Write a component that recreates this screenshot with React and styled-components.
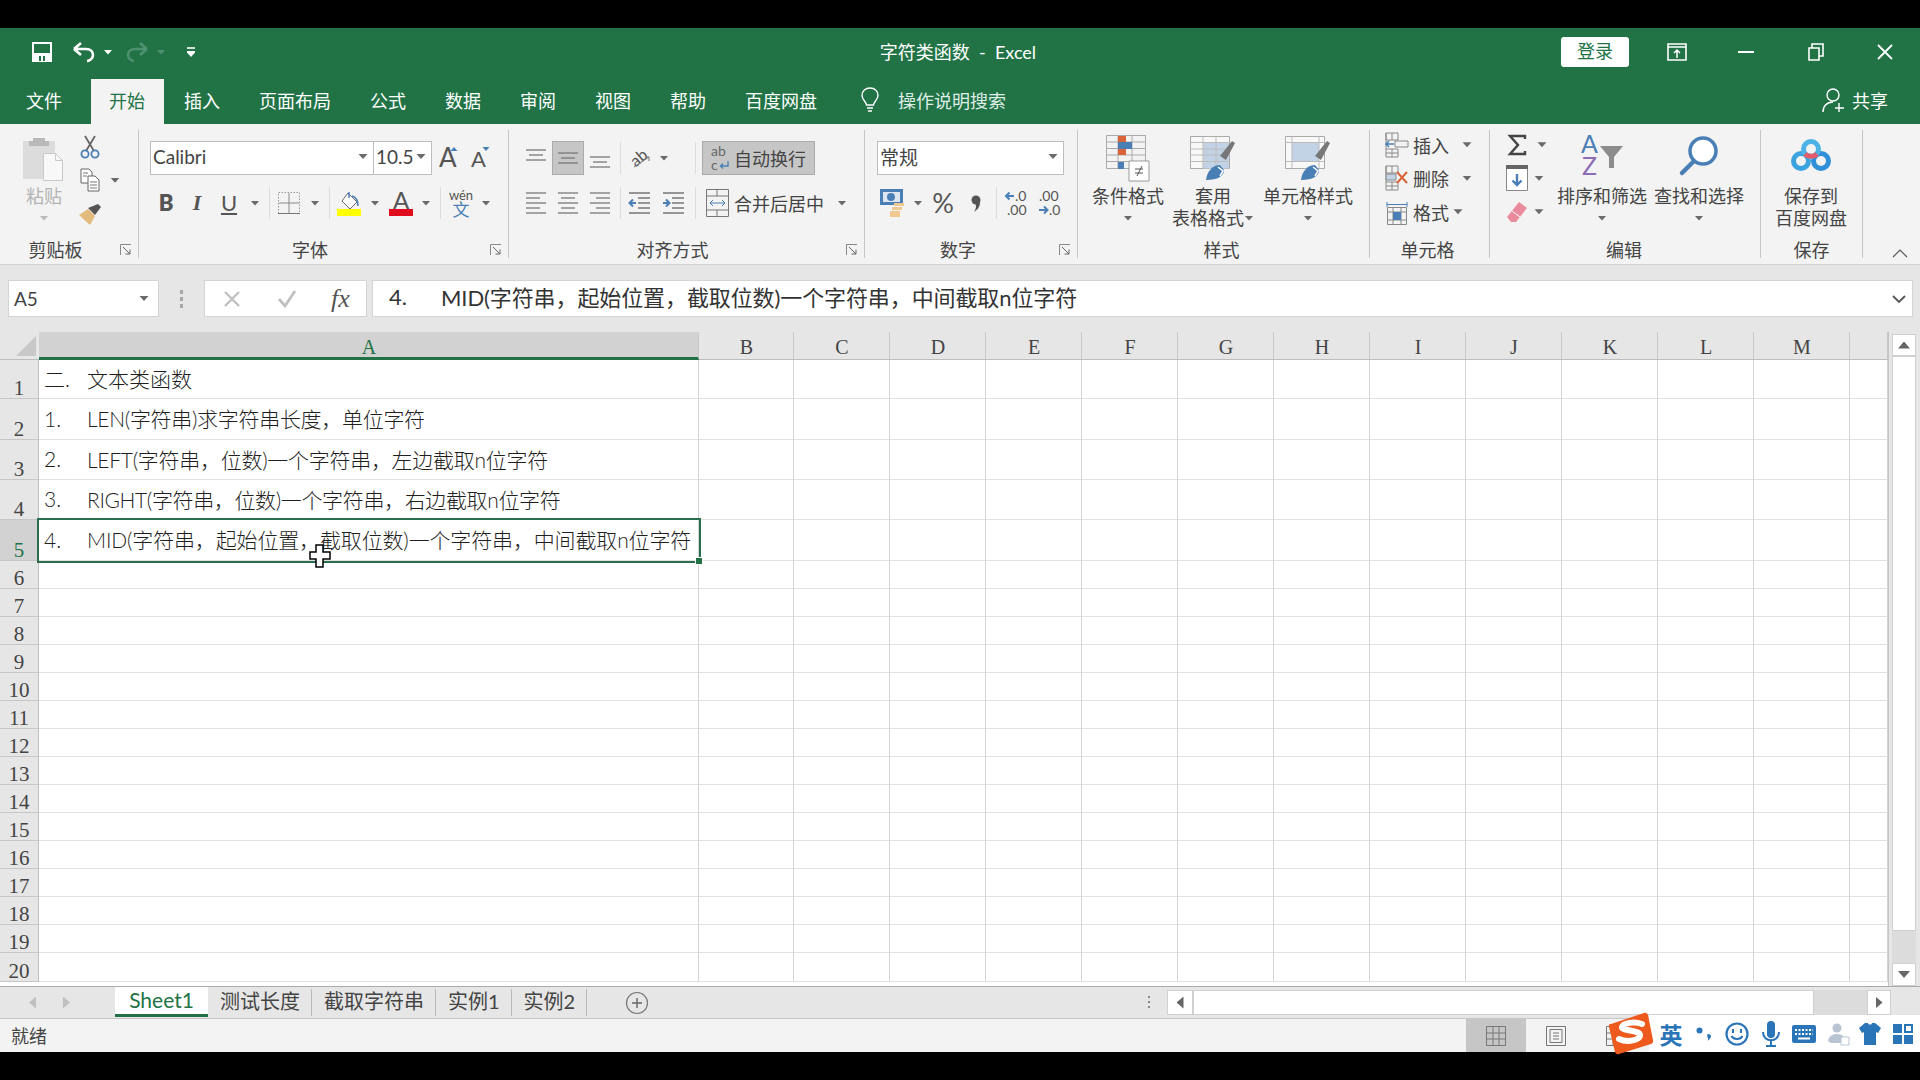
import React from 'react'
import styled, { createGlobalStyle } from 'styled-components'

const GREEN = '#217346'
const INK = '#444'
const BLUE = '#4a7fb5'

const Global = createGlobalStyle`
  html, body { margin: 0; padding: 0; background: #000; overflow: hidden; }
  * { box-sizing: border-box; }
  svg { display: block; flex: none; overflow: visible; }
`

const Icon = ({ w, h, children }) => (
  <svg width={w} height={h} viewBox={`0 0 ${w} ${h}`} fill="none">{children}</svg>
)

/* title bar icons */
const SaveIcon = () => (
  <Icon w={20} h={20}>
    <path d="M1 1h18v18H1z" stroke="#fff" strokeWidth="2" />
    <path d="M1 11h18v8H1z" fill="#fff" />
    <path d="M7 14h2v5H7z" fill={GREEN} />
    <path d="M11 14h2v5h-2z" fill={GREEN} />
  </Icon>
)
const UndoIcon = ({ c = '#fff' }) => (
  <Icon w={24} h={22}>
    <path d="M2 8l7-6M2 8l7 6M2 8h12c5 0 7 3 7 6s-3 6-6 6" stroke={c} strokeWidth="2.6" />
  </Icon>
)
const RedoIcon = () => (
  <Icon w={24} h={22}>
    <path d="M22 8l-7-6M22 8l-7 6M22 8H10c-5 0-7 3-7 6s3 6 6 6" stroke="#4f9070" strokeWidth="2.6" />
  </Icon>
)
const CustomizeIcon = () => (
  <Icon w={10} h={11}>
    <path d="M1 1h8" stroke="#fff" strokeWidth="1.6" />
    <path d="M1 4h8v1.5L5 10 1 5.500z" fill="#fff" />
  </Icon>
)
const RibbonModeIcon = () => (
  <Icon w={20} h={18}>
    <path d="M1 1h18v16H1z M1 4h18" stroke="#fff" strokeWidth="1.6" />
    <path d="M10 15V7M7 10l3-3 3 3" stroke="#fff" strokeWidth="1.5" />
  </Icon>
)
const MinIcon = () => <Icon w={16} h={4}><path d="M0 2h16" stroke="#fff" strokeWidth="2" /></Icon>
const RestoreIcon = () => (
  <Icon w={16} h={18}>
    <path d="M1 5h10v12H1zM4 5V1h11v12h-4" stroke="#fff" strokeWidth="1.6" />
  </Icon>
)
const CloseIcon = () => <Icon w={16} h={16}><path d="M1 1l14 14M15 1L1 15" stroke="#fff" strokeWidth="1.8" /></Icon>
const BulbIcon = () => (
  <Icon w={20} h={26}>
    <path d="M6.500 18c0-3-4.500-5-4.500-9.500C2 4 5.500 1 10 1s8 3 8 7.500C18 13 13.500 15 13.500 18z" stroke="#fff" strokeWidth="1.4" />
    <path d="M7 21h6M8 24h4" stroke="#fff" strokeWidth="1.6" />
  </Icon>
)
const ShareIcon = () => (
  <Icon w={24} h={26}>
    <circle cx="11" cy="8" r="6" stroke="#fff" strokeWidth="1.4" />
    <path d="M1 25c0-6 4-10 10-10M17 16v9M13 21h9" stroke="#fff" strokeWidth="1.4" />
  </Icon>
)

/* clipboard */
const PasteIcon = () => (
  <Icon w={42} h={46}>
    <path d="M0 6h32v38H0z" fill="#dcdcdc" />
    <path d="M10 3h12v3h4v5H6V6h4z" fill="#b9b9b9" />
    <path d="M20.500 18.500h12l7 7v20h-19z" fill="#f8f8f8" stroke="#c8c8c8" />
    <path d="M32.500 18.500v7h7" stroke="#c8c8c8" />
  </Icon>
)
const ScissorsIcon = () => (
  <Icon w={20} h={24}>
    <path d="M5 1l9 15M15 1L6 16" stroke="#666" strokeWidth="1.8" />
    <circle cx="5" cy="19" r="3.600" stroke={BLUE} strokeWidth="1.8" />
    <circle cx="15" cy="19" r="3.600" stroke={BLUE} strokeWidth="1.8" />
  </Icon>
)
const CopyIcon = () => (
  <Icon w={20} h={24}>
    <path d="M1 1h8l3 3v11H1z" fill="#fff" stroke="#666" />
    <path d="M8 8h7l4 4v11H8z" fill="#fff" stroke="#666" />
    <path d="M3 5h5M3 8h4M10 14h7M10 17h7M10 20h7" stroke="#777" />
  </Icon>
)
const BrushIcon = () => (
  <Icon w={24} h={22}>
    <path d="M1 12l9-6 7 7-5 9z" fill="#e3bb7c" />
    <path d="M10 5l7 7 6-8-3-3z" fill="#555" />
  </Icon>
)

/* font */
const GrowIcon = () => (
  <Icon w={26} h={24}>
    <text x="5" y="21" fontFamily="Lato, sans-serif" fontSize="26" fill="#555">A</text>
    <path d="M16.500 5l3.500-4 3.500 4z" fill={BLUE} />
  </Icon>
)
const ShrinkIcon = () => (
  <Icon w={26} h={24}>
    <text x="7" y="21" fontFamily="Lato, sans-serif" fontSize="22" fill="#555">A</text>
    <path d="M18.500 1h7L22 5z" fill={BLUE} />
  </Icon>
)
const BorderIcon = () => (
  <Icon w={22} h={22}>
    <path d="M.5.500h21v21H.5z" stroke="#999" strokeDasharray="1.500 1.500" />
    <path d="M11 1v20M1 11h20" stroke="#888" />
    <path d="M0 21.500h22" stroke="#777" />
  </Icon>
)
const FillIcon = () => (
  <Icon w={24} h={25}>
    <path d="M11 2l9 9-7 7-8-8z" fill="#fff" stroke="#666" />
    <path d="M12 1v6M15 5c4 1 6 5 6 10" stroke={BLUE} strokeWidth="1.500" />
    <path d="M0 18h24v7H0z" fill="#ffff00" />
  </Icon>
)
const ColorIcon = () => (
  <Icon w={24} h={25}>
    <text x="12" y="18" textAnchor="middle" fontFamily="Lato, sans-serif" fontSize="24" fill="#555">A</text>
    <path d="M0 18h24v7H0z" fill="#e00b1c" />
  </Icon>
)

/* align */
const Lines = ({ rows }) => (
  <Icon w={22} h={24}>
    {rows.map(([a, b, y], i) => <path key={i} d={`M${a} ${y}H${b}`} stroke="#777" strokeWidth="1.300" />)}
  </Icon>
)
const alTop = [[1, 21, 4], [4, 18, 9], [1, 21, 14]]
const alMid = [[1, 21, 7], [4, 18, 12], [1, 21, 17]]
const alBot = [[1, 21, 11], [4, 18, 16], [1, 21, 21]]
const leftL = [[1, 21, 2], [1, 15, 7], [1, 21, 12], [1, 15, 17], [1, 21, 22]]
const centerL = [[1, 21, 2], [4, 18, 7], [1, 21, 12], [4, 18, 17], [1, 21, 22]]
const rightL = [[1, 21, 2], [7, 21, 7], [1, 21, 12], [7, 21, 17], [1, 21, 22]]
const OrientIcon = () => (
  <Icon w={20} h={20}>
    <text x="1" y="15" fontFamily="Lato, sans-serif" fontSize="16" fill="#555" transform="rotate(-40 9 12)">ab</text>
    <path d="M3 19L18 9M14 9h4v4" stroke="#777" />
  </Icon>
)
const IndentIcon = ({ out }) => (
  <Icon w={22} h={24}>
    <path d="M1 2h21M10 7h12M10 12h12M10 17h12M1 22h21" stroke="#777" strokeWidth="1.300" />
    <path d={out ? 'M8 12H2M5 8.500L1.500 12 5 15.500' : 'M1 12h6M4 8.500L7.500 12 4 15.500'} stroke={BLUE} strokeWidth="2" />
  </Icon>
)
const MergeIcon = () => (
  <Icon w={23} h={28}>
    <path d="M.5.500h22v27H.5zM.5 7h22M.5 21h22M11 .500V7M11 21v7" stroke="#777" />
    <path d="M4 14h15M7 11l-3 3 3 3M16 11l3 3-3 3" stroke={BLUE} />
  </Icon>
)
const WrapMark = () => (
  <Icon w={20} h={28}>
    <text x="0" y="12" fontFamily="Lato, sans-serif" fontSize="14" fill="#666">ab</text>
    <text x="0" y="26" fontFamily="Lato, sans-serif" fontSize="14" fill="#666">c</text>
    <path d="M17 17v5h-7M12 19.500L9.500 22l2.500 2.500" stroke={BLUE} strokeWidth="1.300" />
  </Icon>
)

/* number */
const MoneyIcon = () => (
  <Icon w={24} h={28}>
    <path d="M0 0h23v16H0z" fill={BLUE} />
    <path d="M3 3h17v10H3z" fill="#dde6f0" />
    <circle cx="11" cy="8" r="4" fill={BLUE} />
    <path d="M12 18h10v3H12zM14 14h10v3H14zM10 22h10v3H10zM10 25h10v3H10z" fill="#efc98f" />
  </Icon>
)
const CommaIcon = () => (
  <Icon w={10} h={17}>
    <circle cx="5" cy="5" r="4.500" fill="#555" />
    <path d="M9 5c.5 5-1 9-6 12 2-3 2.500-6 1.500-8z" fill="#555" />
  </Icon>
)
const DecimalIcon = ({ inc }) => (
  <Icon w={24} h={26}>
    {inc ? (
      <>
        <path d="M9 6H1M4.500 2.500L1 6l3.500 3.500" stroke={BLUE} strokeWidth="2" />
        <text x="10" y="11" fontFamily="Lato, sans-serif" fontSize="14" fill="#555">.0</text>
        <text x="2" y="25" fontFamily="Lato, sans-serif" fontSize="14" fill="#555">.00</text>
      </>
    ) : (
      <>
        <text x="2" y="11" fontFamily="Lato, sans-serif" fontSize="14" fill="#555">.00</text>
        <path d="M2 20h8M7 16.500l3.500 3.500L7 23.500" stroke={BLUE} strokeWidth="2" />
        <text x="12" y="25" fontFamily="Lato, sans-serif" fontSize="14" fill="#555">.0</text>
      </>
    )}
  </Icon>
)

/* styles */
const CondIcon = () => (
  <Icon w={44} h={46}>
    <path d="M.5.500h39v33H.5zM.5 7h39M.5 13.500h39M.5 20h39M.5 26.500h39M12 .500v33M26 .500v33" stroke="#aaa" />
    <path d="M12 1h8v6h-8zM12 14h8v6h-8z" fill="#d9643a" />
    <path d="M12 7h14v7H12zM12 27h6v7h-6z" fill={BLUE} />
    <path d="M23 26h20v20H23z" fill="#fff" stroke="#999" />
    <path d="M29 34h8M29 38h8M36 31l-5 10" stroke="#555" />
  </Icon>
)
const TableStyleIcon = ({ plain }) => (
  <Icon w={46} h={46}>
    <path d="M.5 1.500h39v32H.5z" fill="#f8f8f8" stroke="#aaa" />
    <path d={plain ? 'M7 7.500h27v19H7z' : 'M13 7.500h26v26H13z'} fill="#c3d3e6" />
    <path d={plain ? 'M.5 7.500h39M.5 26.500h39M7 1.500v32M34 1.500v32' : 'M.5 7.500h39M.5 14h39M.5 20h39M.5 26.500h39M13 1.500v32M26 1.500v32'} stroke="#bbb" />
    <path d="M30 21l12-15 3 2-9 17z" fill="#777" />
    <path d="M16 45c1-9 7-15 14-15l4 5c0 6-6 10-18 10z" fill={BLUE} />
    <path d="M28 32l5 4-3 5" stroke="#fff" strokeWidth="1.500" />
  </Icon>
)

/* cells */
const CellIcon = ({ kind }) => (
  <Icon w={24} h={26}>
    <path d="M1 1h12v7H1zM1 1v24h12V17H1M7 1v7M7 17v8M1 21h12" stroke="#888" />
    {kind === 'insert' && <><path d="M10 9h13v6H10z" stroke="#888" /><path d="M9 12H1M4 9l-3 3 3 3" stroke={BLUE} strokeWidth="1.500" /></>}
    {kind === 'delete' && <><path d="M1 9h10v6H1z" fill="#c3d3e6" stroke="#888" /><path d="M12 7l10 11M22 7L12 18" stroke="#d9643a" strokeWidth="2" /></>}
  </Icon>
)
const CellFormatIcon = () => (
  <Icon w={24} h={26}>
    <path d="M2 5.500h20M2 3v5M22 3v5" stroke={BLUE} />
    <path d="M2.500 8.500h19v17h-19zM8 8.500v17M16 8.500v17M2.500 13h19M2.500 21h19" stroke="#888" />
    <path d="M8 13h8v8H8z" fill={BLUE} />
  </Icon>
)

/* editing */
const SigmaIcon = () => (
  <Icon w={20} h={22}>
    <path d="M18 5V2H3l8 9-8 9h15v-3" stroke="#444" strokeWidth="2.400" />
  </Icon>
)
const FillDownIcon = () => (
  <Icon w={22} h={26}>
    <path d="M.5.500h21v25H.5z" fill="#fff" stroke="#888" />
    <path d="M0 0h22v4H0z" fill="#666" />
    <path d="M11 9v11M6.500 15.500L11 20l4.500-4.500" stroke={BLUE} strokeWidth="2.400" />
  </Icon>
)
const EraserIcon = () => (
  <Icon w={22} h={22}>
    <path d="M13 1l8 6L10 21H5L1 16z" fill="#e98b9c" />
    <path d="M6 10l8 6" stroke="#fff" />
  </Icon>
)
const SortIcon = () => (
  <Icon w={42} h={40}>
    <text x="0" y="18" fontFamily="Lato, sans-serif" fontSize="25" fill={BLUE}>A</text>
    <text x="1" y="40" fontFamily="Lato, sans-serif" fontSize="25" fill="#8f6db5">Z</text>
    <path d="M19 11h23l-9 11v11h-5V22z" fill="#8c8c8c" />
  </Icon>
)
const FindIcon = () => (
  <Icon w={40} h={40}>
    <circle cx="24" cy="16" r="13" fill="#fff" stroke={BLUE} strokeWidth="3.500" />
    <path d="M14 27L3 38" stroke={BLUE} strokeWidth="4.500" strokeLinecap="round" />
  </Icon>
)
const BaiduIcon = () => (
  <Icon w={40} h={34}>
    <circle cx="10" cy="22" r="7.500" stroke="#3aa3e0" strokeWidth="5" />
    <circle cx="30" cy="22" r="7.500" stroke="#2f8fd8" strokeWidth="5" />
    <circle cx="20" cy="10" r="7.500" stroke="#4db3e6" strokeWidth="5" />
    <path d="M14 15c3 3 9 3 12 0" stroke="#e25c6c" strokeWidth="5" />
  </Icon>
)

/* bars */
const LauncherIcon = () => (
  <Icon w={12} h={12}>
    <path d="M.5 11V.500H11" stroke="#888" />
    <path d="M3 3l7 7M10 5.500V10H5.500" stroke="#666" />
  </Icon>
)
const ChevronUp = () => <Icon w={16} h={9}><path d="M1 8l7-7 7 7" stroke="#555" strokeWidth="1.200" /></Icon>
const ChevronDown = () => <Icon w={14} h={8}><path d="M1 1l6 6 6-6" stroke="#555" strokeWidth="1.800" /></Icon>
const CancelIcon = () => <Icon w={18} h={18}><path d="M2 2l14 14M16 2L2 16" stroke="#c0c0c0" strokeWidth="2.400" /></Icon>
const EnterIcon = () => <Icon w={20} h={18}><path d="M2 9l6 7L18 1" stroke="#c0c0c0" strokeWidth="2.800" /></Icon>
const Corner = () => <Icon w={20} h={20}><path d="M20 0v20H0z" fill="#c8c8c8" /></Icon>
const PlusCursor = () => (
  <Icon w={22} h={24}>
    <path d="M7 1h7v7h7v7h-7v8H7v-8H1V8h6z" fill="#fff" stroke="#000" strokeWidth="1.500" />
  </Icon>
)
const AddSheet = () => (
  <Icon w={24} h={24}>
    <circle cx="12" cy="12" r="10.500" stroke="#777" strokeWidth="1.200" />
    <path d="M12 7v10M7 12h10" stroke="#666" strokeWidth="1.400" />
  </Icon>
)
const NormalView = () => (
  <Icon w={20} h={20}>
    <path d="M.5.500h19v19H.5zM7 .500v19M13 .500v19M.5 7h19M.5 13h19" stroke="#777" />
  </Icon>
)
const LayoutView = () => (
  <Icon w={20} h={20}>
    <path d="M.5.500h19v19H.5z" stroke="#777" />
    <path d="M4 3.500h12v13H4zM7 7h6M7 10h6M7 13h6" stroke="#777" />
  </Icon>
)
const SogouLogo = () => (
  <Icon w={46} h={40}>
    <path d="M3 12L36 1c2-.5 3 0 4 2l5 25c.5 2 0 3-2 4L11 42c-2 .5-3 0-4-2L1 15c-.5-2 0-3 2-3z" fill="#ee5a1d" />
    <path d="M34 12c-8-3-19-1-20 3s18 3 18 8-12 8-21 4" stroke="#fff" strokeWidth="6" strokeLinecap="round" />
  </Icon>
)
const ImePunct = () => (
  <Icon w={16} h={14}>
    <circle cx="3.500" cy="3.500" r="3" fill="#2a74b8" />
    <path d="M12 7c2 0 3 1 3 2 0 2-2 4-4 5 1-1 1.500-2 1-3-1-1-1-4 0-4z" fill="#2a74b8" />
  </Icon>
)
const SmileIcon = () => (
  <Icon w={24} h={24}>
    <circle cx="12" cy="12" r="10.500" stroke="#2a74b8" strokeWidth="2.200" />
    <path d="M8 7v4M16 7v4" stroke="#2a74b8" strokeWidth="2" />
    <path d="M6.500 14c2 4 9 4 11 0" stroke="#2a74b8" strokeWidth="2" />
  </Icon>
)
const MicIcon = () => (
  <Icon w={20} h={26}>
    <path d="M6 4h8v9H6z" fill="#2a74b8" />
    <circle cx="10" cy="4" r="4" fill="#2a74b8" />
    <circle cx="10" cy="13" r="4" fill="#2a74b8" />
    <path d="M2 11c0 11 16 11 16 0M10 19v6M5 25h10" stroke="#2a74b8" strokeWidth="2" />
  </Icon>
)
const KeyboardIcon = () => (
  <Icon w={24} h={18}>
    <path d="M2 0h20q2 0 2 2v14q0 2-2 2H2q-2 0-2-2V2q0-2 2-2z" fill="#2a74b8" />
    <path d="M3 5h18M3 9h18" stroke="#fff" strokeWidth="2" strokeDasharray="2 1.500" />
    <path d="M6 13.500h12" stroke="#fff" strokeWidth="2" />
  </Icon>
)
const PersonIcon = () => (
  <Icon w={22} h={22}>
    <circle cx="9" cy="5" r="4.500" fill="#b8c4d2" />
    <path d="M0 18c1-5 4-7 9-7 3 0 5 1 6 2v7H3z" fill="#b8c4d2" />
    <path d="M13 14h8v8h-8z" fill="#fff" stroke="#b8c4d2" />
  </Icon>
)
const ShirtIcon = () => (
  <Icon w={22} h={22}>
    <path d="M6 0h3c0 2 4 2 4 0h3l6 5-3 5-2-1v13H5V9l-2 1-3-5z" fill="#2a74b8" />
  </Icon>
)
const TileIcon = () => (
  <Icon w={20} h={20}>
    <path d="M0 0h9v9H0zM11 11h9v9h-9zM0 11h9v9H0z" fill="#2a74b8" />
    <path d="M12 1h7v7h-7z" stroke="#2a74b8" strokeWidth="2" />
  </Icon>
)

const Page = styled.div`
  width: 1920px;
  height: 1080px;
  padding: 28px 0;
  background: #000;
  overflow: hidden;
`

const Window = styled.div`
  height: 1024px;
  display: flex;
  flex-direction: column;
  font-family: Lato, "Noto Sans CJK SC", sans-serif;
  color: ${INK};
  background: #e6e6e6;
`

const TitleBar = styled.div`
  height: 48px;
  display: grid;
  grid-template-columns: 1fr auto 1fr;
  align-items: center;
  background: ${GREEN};
  color: #fff;
`

const Qat = styled.div`
  display: flex;
  align-items: center;
  padding-left: 27px;
`

const Slot = styled.span`
  width: ${p => p.$w}px;
  margin-left: ${p => p.$ml || 0}px;
  flex: none;
  display: flex;
  align-items: center;
  justify-content: center;
`

const Caret = styled.span`
  width: ${p => p.$w || 10}px;
  flex: none;
  height: 5px;
  display: block;
  background: ${p => p.$c || '#6a6a6a'};
  clip-path: polygon(calc(50% - 4.5px) 0, calc(50% + 4.5px) 0, 50% 100%);
`

const DocTitle = styled.div`
  font-size: 18px;
  white-space: pre;
  padding: 0 4px 3px 0;
`

const WinControls = styled.div`
  display: flex;
  align-items: center;
  justify-content: flex-end;
`

const Login = styled.div`
  width: 68px;
  height: 30px;
  margin-right: 13px;
  background: #fff;
  color: ${GREEN};
  border-radius: 3px;
  font-size: 18px;
  line-height: 28px;
  text-align: center;
`

const WinBtn = styled.div`
  width: 69.5px;
  display: flex;
  justify-content: center;
`

const TabStrip = styled.div`
  height: 48px;
  display: flex;
  align-items: flex-end;
  padding-left: 6.5px;
  background: ${GREEN};
  color: #fff;
  font-size: 18px;
`

const RibbonTab = styled.div`
  height: 45px;
  padding: ${p => p.$active ? '0 19px 4px 18px' : '0 19.5px 4px'};
  margin: ${p => p.$active ? '0 0.5px 0 1.5px' : '0'};
  margin-right: ${p => p.$gap ? `${p.$gap}px` : undefined};
  display: flex;
  align-items: center;
  background: ${p => p.$active ? '#f3f3f3' : 'transparent'};
  color: ${p => p.$active ? GREEN : '#fff'};
`

const TellMe = styled.div`
  height: 45px;
  padding-bottom: 4px;
  display: flex;
  align-items: center;
  gap: 18px;
  margin-left: 23.5px;
  color: #dfeee6;
`

const ShareBox = styled.div`
  height: 45px;
  margin-left: auto;
  padding: 0 32px 4px 0;
  display: flex;
  align-items: center;
  gap: 6px;
`

const Ribbon = styled.div`
  height: 141px;
  padding-top: 6px;
  display: flex;
  align-items: flex-start;
  background: #f3f3f3;
  border-bottom: 1px solid #d2d2d2;
  font-size: 18px;
`

const Group = styled.section`
  width: ${p => p.$w}px;
  height: 128px;
  flex: none;
  display: flex;
  flex-direction: column;
  border-right: 1px solid #c6c6c6;
`

const Tools = styled.div`
  flex: 1;
  display: flex;
  flex-direction: column;
  gap: 11px;
  padding: 11px 0 0 ${p => p.$pl || 0}px;
`

const Across = styled.div`
  flex: 1;
  display: flex;
  align-items: flex-start;
  gap: ${p => p.$gap || 0}px;
  padding-left: ${p => p.$pl || 0}px;
`

const Line = styled.div`
  height: 34px;
  display: flex;
  align-items: center;
`

const Foot = styled.div`
  height: 16px;
  display: flex;
  align-items: center;
`

const GroupLabel = styled.div`
  flex: 1;
  text-align: center;
  line-height: 16px;
  padding-right: ${p => p.$pr || 0}px;
  white-space: nowrap;
`

const Launcher = styled.span`
  margin-right: 6px;
  flex: none;
`

const Combo = styled.div`
  width: ${p => p.$w}px;
  height: 34px;
  flex: none;
  margin-left: ${p => p.$ml || 0}px;
  display: flex;
  align-items: center;
  justify-content: space-between;
  padding: 0 5px 3px 2px;
  background: #fff;
  border: 1px solid #bdbdbd;
  font-size: 19px;
`

const ToolSep = styled.span`
  width: 1px;
  height: 32px;
  flex: none;
  margin-left: ${p => p.$ml || 0}px;
  background: #dcdcdc;
`

const Toggle = styled.div`
  width: ${p => p.$w}px;
  height: 34px;
  flex: none;
  margin-left: ${p => p.$ml || 0}px;
  display: flex;
  align-items: center;
  justify-content: center;
  gap: ${p => p.$gap || 0}px;
  background: ${p => p.$on ? '#c6c6c6' : 'transparent'};
  border: ${p => p.$on ? '1px solid #ababab' : 'none'};
`

const StyleMark = styled.span`
  width: ${p => p.$w}px;
  flex: none;
  text-align: center;
  font-size: ${p => p.$size || 22}px;
  line-height: 24px;
  color: #555;
  font-family: ${p => p.$serif ? '"Liberation Serif", serif' : 'inherit'};
  font-weight: ${p => p.$bold ? 800 : 400};
  font-style: ${p => p.$italic ? 'italic' : 'normal'};
  text-decoration: ${p => p.$under ? 'underline' : 'none'};
`

const Pinyin = styled.span`
  width: 40px;
  flex: none;
  display: flex;
  flex-direction: column;
  align-items: center;
  font-size: 13px;
  line-height: 13px;
  color: #555;
  b {
    font-weight: 400;
    font-size: 17px;
    line-height: 16px;
    color: ${BLUE};
  }
`

const BigBtn = styled.div`
  width: ${p => p.$w}px;
  flex: none;
  display: flex;
  flex-direction: column;
  align-items: center;
  padding-top: 5px;
`

const BigIcon = styled.div`
  height: 50px;
  padding-top: ${p => p.$pt || 0}px;
`

const BigText = styled.div`
  height: 22px;
  line-height: 22px;
  display: flex;
  align-items: center;
  white-space: nowrap;
  color: ${p => p.$dim ? '#b4b4b4' : INK};
`

const Stack = styled.div`
  width: ${p => p.$w}px;
  flex: none;
  margin-top: ${p => p.$mt || 0}px;
  display: flex;
  flex-direction: column;
`

const StackRow = styled.div`
  height: 33.5px;
  display: flex;
  align-items: center;
`

const CellText = styled.span`
  width: 36px;
  margin-left: 3px;
  white-space: nowrap;
`

const Collapse = styled.div`
  flex: 1;
  height: 128px;
  display: flex;
  align-items: flex-end;
  justify-content: flex-end;
  padding-right: 12px;
`

const FormulaRow = styled.div`
  height: 67px;
  padding-top: 15px;
  display: flex;
  align-items: flex-start;
  background: #e6e6e6;
`

const NameBox = styled.div`
  width: 151px;
  height: 37px;
  margin-left: 8px;
  padding: 0 9px 0 5px;
  display: flex;
  align-items: center;
  justify-content: space-between;
  background: #fff;
  border: 1px solid #d4d4d4;
  font-size: 19px;
`

const Grip = styled.span`
  width: 45px;
  height: 37px;
  display: flex;
  flex-direction: column;
  align-items: center;
  justify-content: center;
  gap: 3px;
  i {
    width: 3px;
    height: 4px;
    background: #a8a8a8;
  }
`

const FxBox = styled.div`
  width: 163px;
  height: 37px;
  display: flex;
  align-items: center;
  padding-left: 18px;
  background: #fff;
  border: 1px solid #d4d4d4;
`

const FxMark = styled.span`
  margin-left: 34px;
  font-family: "Liberation Serif", serif;
  font-style: italic;
  font-size: 26px;
  line-height: 30px;
  color: #555;
`

const FormulaBox = styled.div`
  width: 1541px;
  height: 37px;
  margin-left: 5px;
  padding: 0 6px 0 16px;
  display: flex;
  align-items: center;
  background: #fff;
  border: 1px solid #d4d4d4;
  font-size: 22px;
  color: #333;
  white-space: nowrap;
`

const FormulaNum = styled.span`
  width: 52px;
  flex: none;
  padding-bottom: 5px;
`

const FormulaText = styled.span`
  flex: 1;
  padding-bottom: 5px;
  letter-spacing: -0.1px;
`

const SheetArea = styled.div`
  height: 654px;
  display: flex;
  background: #e6e6e6;
`

const Grid = styled.div`
  width: 1889px;
  flex: none;
  display: flex;
  flex-direction: column;
  background: #fff;
  border-right: 1px solid #c6c6c6;
`

const GridRow = styled.div`
  height: ${p => p.$h}px;
  flex: none;
  display: grid;
  grid-template-columns: 39px 660px 95px repeat(11, 96px) 1fr;
  grid-template-rows: ${p => p.$h}px;
`

const CornerCell = styled.div`
  background: #e6e6e6;
  display: flex;
  align-items: flex-end;
  justify-content: flex-end;
  padding: 0 3px 3px 0;
  border-bottom: 1px solid #bdbdbd;
`

const ColHead = styled.div`
  background: ${p => p.$on ? '#d2d2d2' : '#e6e6e6'};
  color: ${p => p.$on ? GREEN : INK};
  border-right: 1px solid #c6c6c6;
  border-bottom: ${p => p.$on ? `3px solid ${GREEN}` : '1px solid #bdbdbd'};
  padding: 3px 0 0 1px;
  text-align: center;
  font-family: "Liberation Serif", serif;
  font-size: 20px;
  line-height: 24px;
`

const RowHead = styled.div`
  background: ${p => p.$on ? '#d2d2d2' : '#e6e6e6'};
  color: ${p => p.$on ? GREEN : INK};
  border-right: 1px solid #bdbdbd;
  border-bottom: 1px solid #c6c6c6;
  display: flex;
  align-items: flex-end;
  justify-content: center;
  font-family: "Liberation Serif", serif;
  font-size: 21px;
  line-height: 20px;
`

const Cell = styled.div`
  position: relative;
  min-width: 0;
  display: flex;
  align-items: center;
  padding: 0 0 2px 5px;
  background: #fff;
  color: #1f1f1f;
  font-size: 21px;
  font-weight: 300;
  white-space: nowrap;
  border-right: 1px solid #d4d4d4;
  border-bottom: 1px solid #e1e1e1;
  box-shadow: ${p => p.$sel ? '0 0 0 2px #2a6f4d' : 'none'};
  z-index: ${p => p.$sel ? 1 : 0};
`

const Marker = styled.span`
  width: 43px;
  flex: none;
`

const CellValue = styled.span`
  letter-spacing: ${p => p.$track || 0}px;
`

const Handle = styled.span`
  position: absolute;
  right: -5px;
  bottom: -5px;
  width: 8px;
  height: 8px;
  background: ${GREEN};
  border: 1px solid #fff;
`

const Pointer = styled.span`
  position: absolute;
  left: 270px;
  top: 24px;
  z-index: 2;
`

const VScroll = styled.div`
  width: 24px;
  margin-left: 3px;
  padding-top: 2px;
  display: flex;
  flex-direction: column;
`

const ScrollBtn = styled.div`
  height: ${p => p.$h}px;
  width: ${p => p.$w ? `${p.$w}px` : 'auto'};
  flex: none;
  display: flex;
  align-items: center;
  justify-content: center;
  background: #fff;
  border: 1px solid #d0d0d0;
`

const Arrow = styled.span`
  display: block;
  width: ${p => p.$horizontal ? 7 : 12}px;
  height: ${p => p.$horizontal ? 12 : 7}px;
  background: ${p => p.$c || '#666'};
  clip-path: ${p => ({
    up: 'polygon(50% 0, 100% 100%, 0 100%)',
    down: 'polygon(0 0, 100% 0, 50% 100%)',
    left: 'polygon(100% 0, 100% 100%, 0 50%)',
    right: 'polygon(0 0, 100% 50%, 0 100%)',
  })[p.$dir]};
`

const VThumb = styled.div`
  height: 575px;
  flex: none;
  background: #fff;
  border: 1px solid #d0d0d0;
`

const VTrack = styled.div`
  flex: 1;
  background: #dcdcdc;
`

const TabBar = styled.div`
  height: 33px;
  display: flex;
  align-items: flex-start;
  background: #e6e6e6;
  border-top: 1px solid #ababab;
  border-bottom: 1px solid #c6c6c6;
`

const SheetNav = styled.div`
  width: 115px;
  height: 31px;
  flex: none;
  display: flex;
  align-items: center;
  padding-left: 29px;
  gap: 27px;
`

const SheetTab = styled.div`
  height: ${p => p.$on ? 30 : 27}px;
  margin-top: ${p => p.$on ? 0 : 2}px;
  width: ${p => p.$on ? '93px' : 'auto'};
  padding: ${p => p.$on ? '0 0 3px' : '0 11px 4px 12px'};
  flex: none;
  display: flex;
  align-items: center;
  justify-content: center;
  font-size: ${p => p.$on ? 21 : 20}px;
  color: ${p => p.$on ? GREEN : INK};
  background: ${p => p.$on ? '#fff' : 'transparent'};
  border-bottom: ${p => p.$on ? `3px solid ${GREEN}` : 'none'};
  border-right: ${p => p.$on ? 'none' : '1px solid #b8b8b8'};
`

const AddBtn = styled.span`
  margin: 4px 0 0 38px;
  flex: none;
`

const SplitDots = styled.span`
  width: 2px;
  height: 14px;
  margin: 9px 17px 0 auto;
  flex: none;
  background: repeating-linear-gradient(#888 0 2px, transparent 2px 5px);
`

const HScroll = styled.div`
  width: 724px;
  height: 25px;
  margin: 3px 29px 0 0;
  flex: none;
  display: flex;
  background: #dcdcdc;
`

const HThumb = styled.div`
  width: 621px;
  flex: none;
  background: #fff;
  border: 1px solid #d0d0d0;
`

const HTrack = styled.div`
  flex: 1;
`

const StatusBar = styled.div`
  height: 33px;
  position: relative;
  display: flex;
  align-items: center;
  padding: 0 274px 2px 11px;
  background: #f3f3f3;
  font-size: 18px;
`

const ViewBtn = styled.div`
  width: 60px;
  height: 33px;
  flex: none;
  margin-left: ${p => p.$auto ? 'auto' : 0};
  margin-bottom: -2px;
  display: flex;
  align-items: center;
  justify-content: center;
  background: ${p => p.$on ? '#c6c6c6' : 'transparent'};
`

const ImeBar = styled.div`
  position: absolute;
  right: 0;
  bottom: 0;
  width: 271px;
  height: 37px;
  display: flex;
  align-items: center;
  background: #fff;
  color: #2a74b8;
`

const Sogou = styled.span`
  position: absolute;
  left: -41px;
  top: -3px;
`

const ImeGlyph = styled.span`
  font-size: 23px;
  font-weight: 700;
  color: #2a74b8;
`

const tabs = ['文件', '开始', '插入', '页面布局', '公式', '数据', '审阅', '视图', '帮助', '百度网盘']
const columns = ['B', 'C', 'D', 'E', 'F', 'G', 'H', 'I', 'J', 'K', 'L', 'M']
const formula = 'MID(字符串，起始位置，截取位数)一个字符串，中间截取n位字符'
const cells = [
  ['二.', '文本类函数', 0],
  ['1.', 'LEN(字符串)求字符串长度，单位字符', -0.3],
  ['2.', 'LEFT(字符串，位数)一个字符串，左边截取n位字符', -0.28],
  ['3.', 'RIGHT(字符串，位数)一个字符串，右边截取n位字符', -0.36],
  ['4.', formula, -0.15],
]
const heights = [39, 41, 40, 40, 41, 28, 28, 28, 28, 28, 28, 28, 28, 28, 28, 28, 28, 28, 28, 29]
const sheets = ['测试长度', '截取字符串', '实例1', '实例2']

const Rows = () => heights.map((h, i) => (
  <GridRow key={i} $h={h}>
    <RowHead $on={i === 4}>{i + 1}</RowHead>
    <Cell $sel={i === 4}>
      {cells[i] && <><Marker>{cells[i][0]}</Marker><CellValue $track={cells[i][2]}>{cells[i][1]}</CellValue></>}
      {i === 4 && <><Handle /><Pointer><PlusCursor /></Pointer></>}
    </Cell>
    {columns.map(c => <Cell key={c} />)}
    <Cell />
  </GridRow>
))

const App = () => (
  <Page>
    <Global />
    <Window>
      <TitleBar>
        <Qat>
          <Slot $w={30}><SaveIcon /></Slot>
          <Slot $w={28} $ml={13}><UndoIcon /></Slot>
          <Slot $w={20}><Caret $c="#fff" /></Slot>
          <Slot $w={28} $ml={5}><RedoIcon /></Slot>
          <Slot $w={20}><Caret $c="#4f9070" /></Slot>
          <Slot $w={20} $ml={10}><CustomizeIcon /></Slot>
        </Qat>
        <DocTitle>字符类函数  -  Excel</DocTitle>
        <WinControls>
          <Login>登录</Login>
          <WinBtn><RibbonModeIcon /></WinBtn>
          <WinBtn><MinIcon /></WinBtn>
          <WinBtn><RestoreIcon /></WinBtn>
          <WinBtn><CloseIcon /></WinBtn>
        </WinControls>
      </TitleBar>

      <TabStrip>
        {tabs.map((t, i) => <RibbonTab key={t} $active={i === 1} $gap={i === 0 ? 8 : 0}>{t}</RibbonTab>)}
        <TellMe><BulbIcon />操作说明搜索</TellMe>
        <ShareBox><ShareIcon />共享</ShareBox>
      </TabStrip>

      <Ribbon>
        <Group $w={139}>
          <Across $pl={10}>
            <BigBtn $w={68}>
              <BigIcon><PasteIcon /></BigIcon>
              <BigText $dim>粘贴</BigText>
              <BigText><Caret $c="#bbb" /></BigText>
            </BigBtn>
            <Stack $w={50}>
              <StackRow><Slot $w={24}><ScissorsIcon /></Slot></StackRow>
              <StackRow><Slot $w={24}><CopyIcon /></Slot><Caret $w={26} /></StackRow>
              <StackRow><Slot $w={24}><BrushIcon /></Slot></StackRow>
            </Stack>
          </Across>
          <Foot><GroupLabel $pr={9}>剪贴板</GroupLabel><Launcher><LauncherIcon /></Launcher></Foot>
        </Group>

        <Group $w={370}>
          <Tools $pl={11}>
            <Line>
              <Combo $w={224}>Calibri<Caret /></Combo>
              <Combo $w={59} $ml={-1}>10.5<Caret /></Combo>
              <Slot $w={30}><GrowIcon /></Slot>
              <Slot $w={30}><ShrinkIcon /></Slot>
            </Line>
            <Line>
              <StyleMark $w={32} $bold>B</StyleMark>
              <StyleMark $w={30} $italic $serif $bold>I</StyleMark>
              <StyleMark $w={34} $under>U</StyleMark>
              <Caret $w={18} />
              <ToolSep $ml={5} />
              <Slot $w={38}><BorderIcon /></Slot>
              <Caret $w={14} />
              <ToolSep $ml={7} />
              <Slot $w={38}><FillIcon /></Slot>
              <Caret $w={14} />
              <Slot $w={38}><ColorIcon /></Slot>
              <Caret $w={12} />
              <ToolSep $ml={8} />
              <Pinyin>wén<b>文</b></Pinyin>
              <Caret $w={10} />
            </Line>
          </Tools>
          <Foot><GroupLabel $pr={9}>字体</GroupLabel><Launcher><LauncherIcon /></Launcher></Foot>
        </Group>

        <Group $w={356}>
          <Tools $pl={11}>
            <Line>
              <Slot $w={32}><Lines rows={alTop} /></Slot>
              <Toggle $w={32} $on><Lines rows={alMid} /></Toggle>
              <Slot $w={32}><Lines rows={alBot} /></Slot>
              <ToolSep $ml={4} />
              <Slot $w={39}><OrientIcon /></Slot>
              <Caret $w={8} />
              <ToolSep $ml={27} />
              <Toggle $w={113} $ml={6} $on $gap={3}><WrapMark />自动换行</Toggle>
            </Line>
            <Line>
              <Slot $w={32}><Lines rows={leftL} /></Slot>
              <Slot $w={32}><Lines rows={centerL} /></Slot>
              <Slot $w={32}><Lines rows={rightL} /></Slot>
              <ToolSep $ml={4} />
              <Slot $w={36}><IndentIcon out /></Slot>
              <Slot $w={32}><IndentIcon /></Slot>
              <ToolSep $ml={6} />
              <Toggle $w={118} $ml={10} $gap={5}><MergeIcon />合并后居中</Toggle>
              <Caret $w={36} />
            </Line>
          </Tools>
          <Foot><GroupLabel $pr={10}>对齐方式</GroupLabel><Launcher><LauncherIcon /></Launcher></Foot>
        </Group>

        <Group $w={213}>
          <Tools $pl={12}>
            <Line><Combo $w={187}>常规<Caret /></Combo></Line>
            <Line>
              <Slot $w={30}><MoneyIcon /></Slot>
              <Caret $w={22} />
              <StyleMark $w={28} $size={27}>%</StyleMark>
              <Slot $w={38}><CommaIcon /></Slot>
              <ToolSep $ml={1} />
              <Slot $w={40}><DecimalIcon inc /></Slot>
              <Slot $w={24}><DecimalIcon /></Slot>
            </Line>
          </Tools>
          <Foot><GroupLabel $pr={8}>数字</GroupLabel><Launcher><LauncherIcon /></Launcher></Foot>
        </Group>

        <Group $w={292}>
          <Across $pl={6}>
            <BigBtn $w={88}>
              <BigIcon><CondIcon /></BigIcon>
              <BigText>条件格式</BigText>
              <BigText><Caret /></BigText>
            </BigBtn>
            <BigBtn $w={82}>
              <BigIcon><TableStyleIcon /></BigIcon>
              <BigText>套用</BigText>
              <BigText>表格格式<Caret /></BigText>
            </BigBtn>
            <BigBtn $w={108}>
              <BigIcon><TableStyleIcon plain /></BigIcon>
              <BigText>单元格样式</BigText>
              <BigText><Caret /></BigText>
            </BigBtn>
          </Across>
          <Foot><GroupLabel $pr={4}>样式</GroupLabel></Foot>
        </Group>

        <Group $w={120}>
          <Across $pl={14}>
            <Stack $w={100} $mt={-2}>
              <StackRow><Slot $w={26}><CellIcon kind="insert" /></Slot><CellText>插入</CellText><Caret $w={36} /></StackRow>
              <StackRow><Slot $w={26}><CellIcon kind="delete" /></Slot><CellText>删除</CellText><Caret $w={36} /></StackRow>
              <StackRow><Slot $w={26}><CellFormatIcon /></Slot><CellText>格式</CellText><Caret $w={18} /></StackRow>
            </Stack>
          </Across>
          <Foot><GroupLabel $pr={4}>单元格</GroupLabel></Foot>
        </Group>

        <Group $w={271}>
          <Across $pl={12} $gap={4}>
            <Stack $w={51} $mt={-2}>
              <StackRow><Slot $w={30}><SigmaIcon /></Slot><Caret $w={20} /></StackRow>
              <StackRow><Slot $w={30}><FillDownIcon /></Slot><Caret $w={14} /></StackRow>
              <StackRow><Slot $w={30}><EraserIcon /></Slot><Caret $w={14} /></StackRow>
            </Stack>
            <BigBtn $w={90}>
              <BigIcon><SortIcon /></BigIcon>
              <BigText>排序和筛选</BigText>
              <BigText><Caret /></BigText>
            </BigBtn>
            <BigBtn $w={96}>
              <BigIcon><FindIcon /></BigIcon>
              <BigText>查找和选择</BigText>
              <BigText><Caret /></BigText>
            </BigBtn>
          </Across>
          <Foot><GroupLabel $pr={2}>编辑</GroupLabel></Foot>
        </Group>

        <Group $w={102}>
          <Across>
            <BigBtn $w={100}>
              <BigIcon $pt={4}><BaiduIcon /></BigIcon>
              <BigText>保存到</BigText>
              <BigText>百度网盘</BigText>
            </BigBtn>
          </Across>
          <Foot><GroupLabel>保存</GroupLabel></Foot>
        </Group>

        <Collapse><ChevronUp /></Collapse>
      </Ribbon>

      <FormulaRow>
        <NameBox>A5<Caret /></NameBox>
        <Grip><i /><i /><i /></Grip>
        <FxBox><CancelIcon /><Slot $w={20} $ml={36}><EnterIcon /></Slot><FxMark>fx</FxMark></FxBox>
        <FormulaBox>
          <FormulaNum>4.</FormulaNum>
          <FormulaText>{formula}</FormulaText>
          <ChevronDown />
        </FormulaBox>
      </FormulaRow>

      <SheetArea>
        <Grid>
          <GridRow $h={28}>
            <CornerCell><Corner /></CornerCell>
            <ColHead $on>A</ColHead>
            {columns.map(c => <ColHead key={c}>{c}</ColHead>)}
            <ColHead />
          </GridRow>
          <Rows />
        </Grid>
        <VScroll>
          <ScrollBtn $h={22}><Arrow $dir="up" /></ScrollBtn>
          <VThumb />
          <VTrack />
          <ScrollBtn $h={23}><Arrow $dir="down" /></ScrollBtn>
        </VScroll>
      </SheetArea>

      <TabBar>
        <SheetNav>
          <Arrow $dir="left" $horizontal $c="#c0c0c0" />
          <Arrow $dir="right" $horizontal $c="#c0c0c0" />
        </SheetNav>
        <SheetTab $on>Sheet1</SheetTab>
        {sheets.map(s => <SheetTab key={s}>{s}</SheetTab>)}
        <AddBtn><AddSheet /></AddBtn>
        <SplitDots />
        <HScroll>
          <ScrollBtn $h={25} $w={26}><Arrow $dir="left" $horizontal /></ScrollBtn>
          <HThumb />
          <HTrack />
          <ScrollBtn $h={25} $w={24}><Arrow $dir="right" $horizontal /></ScrollBtn>
        </HScroll>
      </TabBar>

      <StatusBar>
        就绪
        <ViewBtn $auto $on><NormalView /></ViewBtn>
        <ViewBtn><LayoutView /></ViewBtn>
        <ViewBtn><NormalView /></ViewBtn>
        <ImeBar>
          <Sogou><SogouLogo /></Sogou>
          <Slot $w={44}><ImeGlyph>英</ImeGlyph></Slot>
          <Slot $w={22}><ImePunct /></Slot>
          <Slot $w={44}><SmileIcon /></Slot>
          <Slot $w={24}><MicIcon /></Slot>
          <Slot $w={42}><KeyboardIcon /></Slot>
          <Slot $w={28}><PersonIcon /></Slot>
          <Slot $w={34}><ShirtIcon /></Slot>
          <Slot $w={32}><TileIcon /></Slot>
        </ImeBar>
      </StatusBar>
    </Window>
  </Page>
)

export default App
